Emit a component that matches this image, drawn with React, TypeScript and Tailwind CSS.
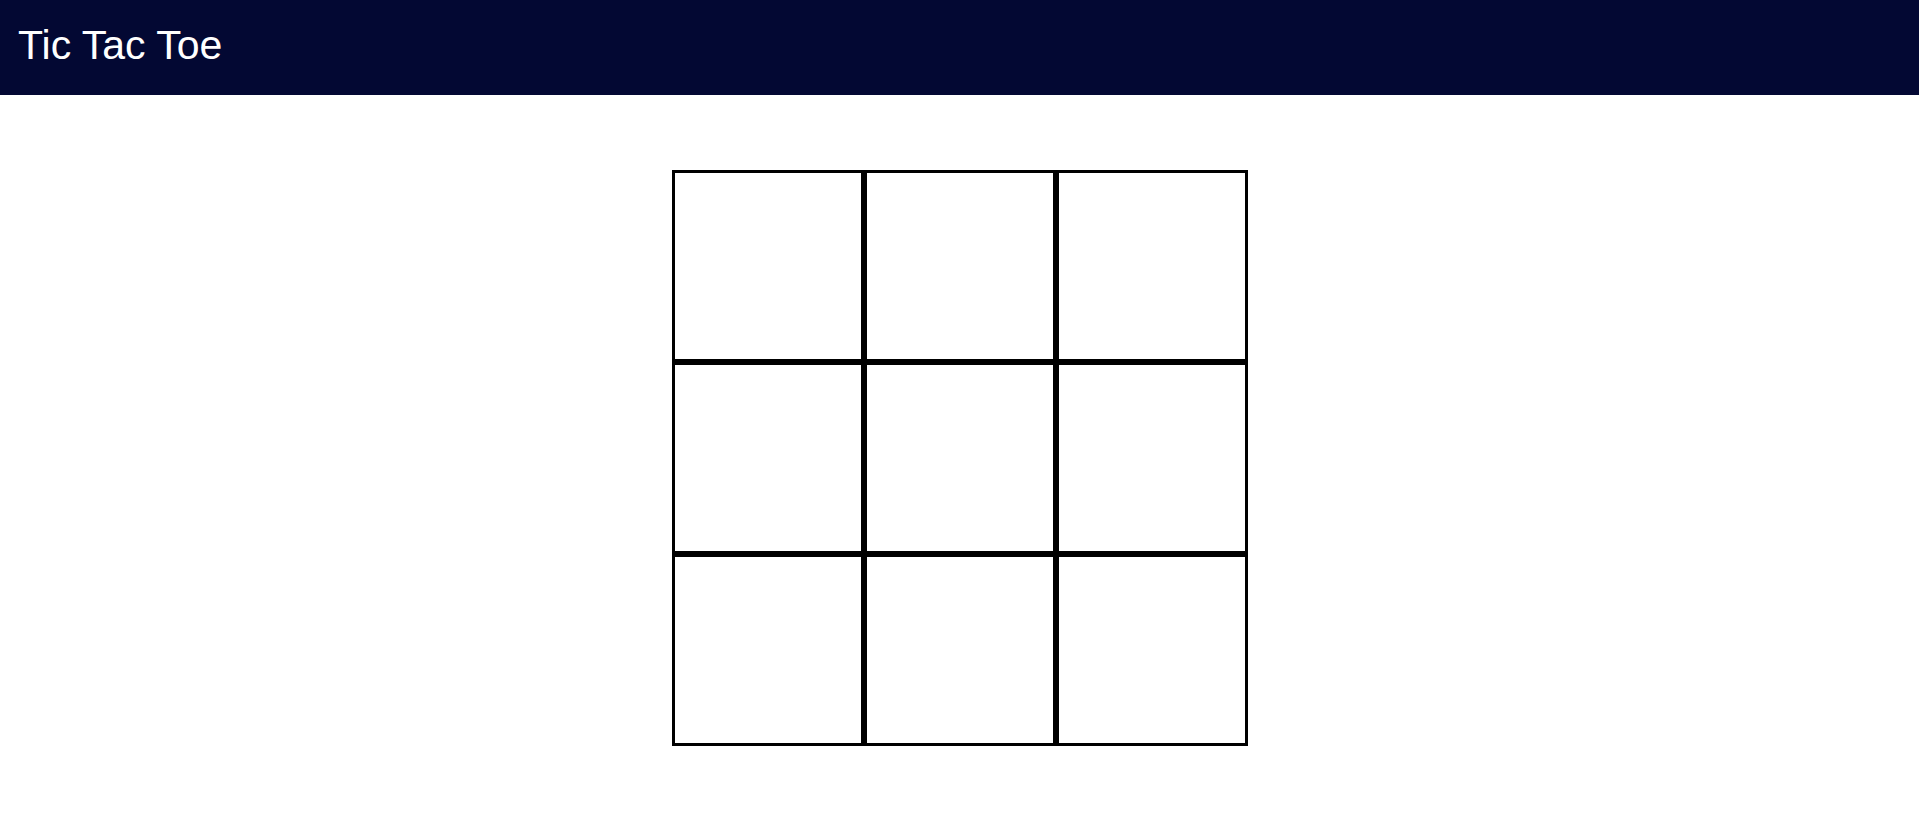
import { useState } from 'react';

export default function App() {
  const [squares, setSquares] = useState<(string | null)[]>(Array(9).fill(null));
  const [xNext, setXNext] = useState(true);

  const handleClick = (i: number) => {
    if (squares[i]) return;
    const next = squares.slice();
    next[i] = xNext ? 'X' : 'O';
    setSquares(next);
    setXNext(!xNext);
  };

  return (
    <div className="min-h-screen bg-white" style={{ fontFamily: '"Liberation Sans", Arial, sans-serif' }}>
      {/* Header */}
      <header className="h-[95px] bg-[#030833] flex items-center px-[18px] pb-[4px]">
        <h1 className="text-[41px] font-normal text-white">Tic Tac Toe</h1>
      </header>

      {/* Board */}
      <main className="flex justify-center pt-[75px]">
        <div className="grid grid-cols-3 w-[576px]">
          {squares.map((value, i) => (
            <button
              key={i}
              onClick={() => handleClick(i)}
              className="w-[192px] h-[192px] border-[3px] border-black bg-white text-[96px] text-black flex items-center justify-center"
            >
              {value}
            </button>
          ))}
        </div>
      </main>
    </div>
  );
}
